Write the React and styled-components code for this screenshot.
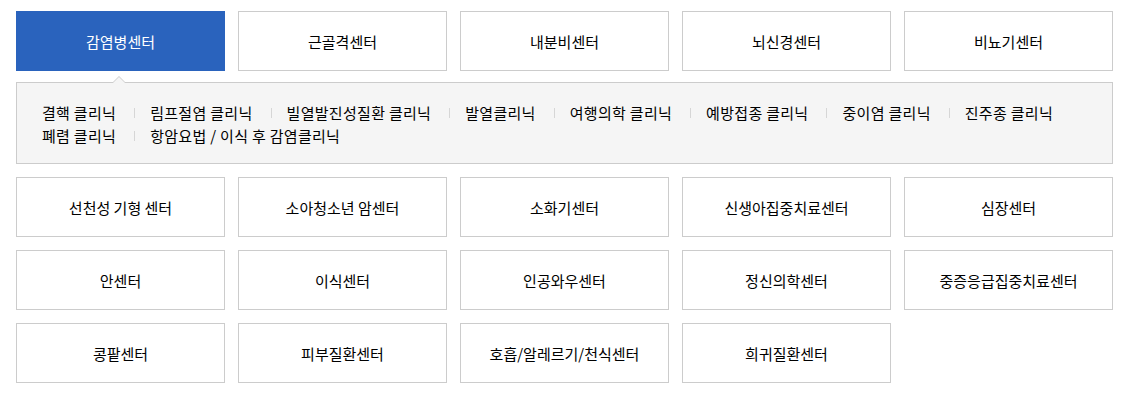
import React from 'react';
import styled, { createGlobalStyle } from 'styled-components';

const GlobalStyle = createGlobalStyle`
  html, body {
    margin: 0;
    padding: 0;
    background: #fff;
  }
  body {
    font-family: "Noto Sans CJK KR", "Noto Sans", sans-serif;
    color: #000;
  }
`;

const Wrap = styled.div`
  padding: 11px 16px;
`;

const Grid = styled.div`
  display: grid;
  grid-template-columns: repeat(5, 209px);
  column-gap: 13px;
  row-gap: 13px;
`;

const CenterButton = styled.a`
  box-sizing: border-box;
  height: 60px;
  display: flex;
  align-items: center;
  justify-content: center;
  border: 1px solid ${props => props.active ? '#2a63bd' : '#cccccc'};
  background: ${props => props.active ? '#2a63bd' : '#fff'};
  color: ${props => props.active ? '#fff' : '#000'};
  font-size: 15px;
  text-decoration: none;
  cursor: pointer;
`;

const Panel = styled.div`
  grid-column: 1 / -1;
  position: relative;
  box-sizing: border-box;
  margin-top: -2px;
  padding: 18px 25px 16px;
  background: #f5f5f5;
  border: 1px solid #cccccc;

  &::before,
  &::after {
    content: '';
    position: absolute;
    left: ${props => props.arrowAt - 6}px;
    width: 0;
    height: 0;
    border-style: solid;
    border-color: transparent;
  }
  &::before {
    top: -7px;
    border-width: 0 7px 7px 7px;
    border-bottom-color: #cccccc;
    left: ${props => props.arrowAt - 7}px;
  }
  &::after {
    top: -6px;
    border-width: 0 6px 6px 6px;
    border-bottom-color: #f5f5f5;
  }
`;

const ClinicRow = styled.ul`
  display: flex;
  align-items: center;
  margin: 0;
  padding: 0;
  list-style: none;
  height: 23px;
`;

const Clinic = styled.li`
  display: flex;
  align-items: center;
  font-size: 15px;
  letter-spacing: 0.3px;
  color: #000;
  white-space: nowrap;

  & + &::before {
    content: '';
    display: inline-block;
    width: 1px;
    height: 10px;
    background: #d6d6d6;
    margin: 0 15px 0 18px;
  }
`;

const centers = [
  '감염병센터', '근골격센터', '내분비센터', '뇌신경센터', '비뇨기센터',
];

const moreCenters = [
  '선천성 기형 센터', '소아청소년 암센터', '소화기센터', '신생아집중치료센터', '심장센터',
  '안센터', '이식센터', '인공와우센터', '정신의학센터', '중증응급집중치료센터',
  '콩팥센터', '피부질환센터', '호흡/알레르기/천식센터', '희귀질환센터',
];

const clinicRows = [
  ['결핵 클리닉', '림프절염 클리닉', '빌열발진성질환 클리닉', '발열클리닉', '여행의학 클리닉', '예방접종 클리닉', '중이염 클리닉', '진주종 클리닉'],
  ['폐렴 클리닉', '항암요법 / 이식 후 감염클리닉'],
];

export default function App() {
  return (
    <Wrap>
      <GlobalStyle />
      <Grid>
        {centers.map((name, i) => (
          <CenterButton key={name} active={i === 0}>{name}</CenterButton>
        ))}
        <Panel arrowAt={102}>
          {clinicRows.map((row, r) => (
            <ClinicRow key={r}>
              {row.map(c => <Clinic key={c}>{c}</Clinic>)}
            </ClinicRow>
          ))}
        </Panel>
        {moreCenters.map(name => (
          <CenterButton key={name}>{name}</CenterButton>
        ))}
      </Grid>
    </Wrap>
  );
}
